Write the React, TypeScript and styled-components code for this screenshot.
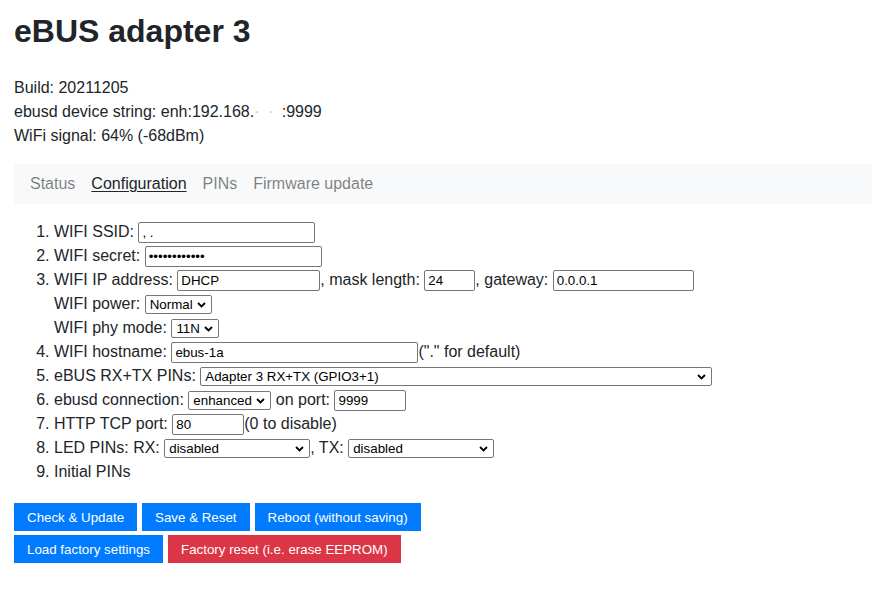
import React from 'react';
import styled, { createGlobalStyle } from 'styled-components';

const GlobalStyle = createGlobalStyle`
  html, body {
    margin: 0;
    padding: 0;
    background: #fff;
  }
  body {
    font-family: "Liberation Sans", Arial, sans-serif;
    font-size: 16px;
    line-height: 24px;
    color: #212529;
  }
`;

const Page = styled.div`
  padding: 0 0 40px 14px;
`;

const Title = styled.h1`
  margin: 0;
  padding-top: 12px;
  font-size: 32px;
  line-height: 38px;
  font-weight: 700;
`;

const Info = styled.div`
  margin-top: 26px;
`;

const Redacted = styled.span`
  color: #c8c8c8;
  letter-spacing: 2px;
`;

const Nav = styled.nav`
  display: flex;
  align-items: center;
  margin-top: 16px;
  height: 40px;
  padding: 0 8px;
  background: #f8f9fa;
`;

const NavLink = styled.a<{ $active?: boolean }>`
  padding: 8px;
  color: ${({ $active }) => ($active ? '#212529' : 'rgba(0, 0, 0, 0.5)')};
  text-decoration: ${({ $active }) => ($active ? 'underline' : 'none')};
  text-underline-offset: 2px;
  cursor: pointer;
`;

const List = styled.ol`
  margin: 16px 0 0;
  padding-left: 40px;
`;

const Item = styled.li`
  line-height: 24px;
`;

const Field = styled.input<{ $w: number }>`
  box-sizing: border-box;
  width: ${({ $w }) => $w}px;
  height: 21px;
  margin: 0;
  padding: 1px 3px;
  border: 1px solid #767676;
  border-radius: 2px;
  font-family: "Liberation Sans", Arial, sans-serif;
  font-size: 13.33px;
  color: #000;
  vertical-align: middle;
`;

const SelectBox = styled.span<{ $w: number }>`
  box-sizing: border-box;
  display: inline-flex;
  align-items: center;
  width: ${({ $w }) => $w}px;
  height: 19px;
  padding-right: 5px;
  border: 1px solid #767676;
  border-radius: 2px;
  background: #fff;
  vertical-align: middle;
`;

const Select = styled.select`
  appearance: none;
  flex: 1;
  min-width: 0;
  height: 17px;
  margin: 0;
  padding: 0 0 0 4px;
  border: none;
  outline: none;
  background: transparent;
  font-family: "Liberation Sans", Arial, sans-serif;
  font-size: 13.33px;
  color: #000;
`;

const Buttons = styled.div`
  display: flex;
  flex-wrap: wrap;
  gap: 4px 5px;
  margin-top: 19px;
  max-width: 420px;
`;

const Button = styled.button<{ $danger?: boolean }>`
  height: 28px;
  padding: 0 13px;
  border: none;
  border-radius: 0;
  background: ${({ $danger }) => ($danger ? '#dc3545' : '#007bff')};
  color: #fff;
  font-family: "Liberation Sans", Arial, sans-serif;
  font-size: 13.33px;
  cursor: pointer;
`;

function Chevron() {
  return (
    <svg width="9" height="6" viewBox="0 0 9 6">
      <path d="M1 1 L4.5 4.5 L8 1" fill="none" stroke="#000" strokeWidth="1.8" />
    </svg>
  );
}

function Dropdown({ w, value, options }: { w: number; value: string; options: string[] }) {
  return (
    <SelectBox $w={w}>
      <Select defaultValue={value}>
        {options.map((o) => (
          <option key={o}>{o}</option>
        ))}
      </Select>
      <Chevron />
    </SelectBox>
  );
}

export default function App() {
  return (
    <>
      <GlobalStyle />
      <Page>
        <Title>eBUS adapter 3</Title>
        <Info>
          Build: 20211205
          <br />
          ebusd device string: enh:192.168.<Redacted>· ·&nbsp;</Redacted>:9999
          <br />
          WiFi signal: 64% (-68dBm)
        </Info>
        <Nav>
          <NavLink>Status</NavLink>
          <NavLink $active>Configuration</NavLink>
          <NavLink>PINs</NavLink>
          <NavLink>Firmware update</NavLink>
        </Nav>
        <List>
          <Item>
            WIFI SSID: <Field $w={177} defaultValue=", ." />
          </Item>
          <Item>
            WIFI secret: <Field $w={177} type="password" defaultValue="abcdefghijkl" />
          </Item>
          <Item>
            WIFI IP address: <Field $w={143} defaultValue="DHCP" />, mask length:{' '}
            <Field $w={51} defaultValue="24" />, gateway: <Field $w={141} defaultValue="0.0.0.1" />
            <br />
            WIFI power: <Dropdown w={67} value="Normal" options={['Normal', 'Low', 'High']} />
            <br />
            WIFI phy mode: <Dropdown w={48} value="11N" options={['11B', '11G', '11N']} />
          </Item>
          <Item>
            WIFI hostname: <Field $w={247} defaultValue="ebus-1a" />("." for default)
          </Item>
          <Item>
            eBUS RX+TX PINs:{' '}
            <Dropdown w={512} value="Adapter 3 RX+TX (GPIO3+1)" options={['Adapter 3 RX+TX (GPIO3+1)']} />
          </Item>
          <Item>
            ebusd connection: <Dropdown w={83} value="enhanced" options={['enhanced', 'standard']} /> on port:{' '}
            <Field $w={72} defaultValue="9999" />
          </Item>
          <Item>
            HTTP TCP port: <Field $w={72} defaultValue="80" />(0 to disable)
          </Item>
          <Item>
            LED PINs: RX: <Dropdown w={146} value="disabled" options={['disabled']} />, TX:{' '}
            <Dropdown w={146} value="disabled" options={['disabled']} />
          </Item>
          <Item>Initial PINs</Item>
        </List>
        <Buttons>
          <Button>Check &amp; Update</Button>
          <Button>Save &amp; Reset</Button>
          <Button>Reboot (without saving)</Button>
          <Button>Load factory settings</Button>
          <Button $danger>Factory reset (i.e. erase EEPROM)</Button>
        </Buttons>
      </Page>
    </>
  );
}
